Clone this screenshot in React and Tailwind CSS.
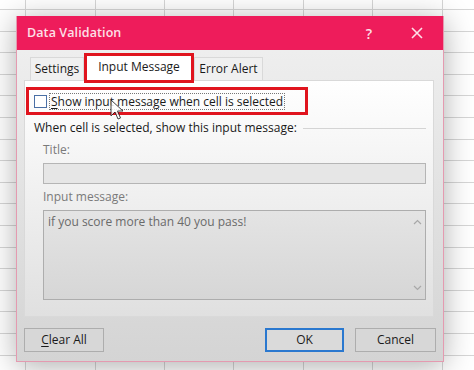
import React from "react";

const cols = [26, 70, 69, 69, 70, 69, 70, 40];
const rows = Array.from({ length: 18 });

function Sheet() {
  return (
    <div className="flex flex-col">
      <div className="flex h-[10px]">
        {cols.map((w, i) => (
          <div key={i} style={{ width: w }} className="shrink-0 border-r border-b border-[#d6d6d6]" />
        ))}
      </div>
      {rows.map((_, r) => (
        <div key={r} className="flex h-[21.6px]">
          {cols.map((w, i) => (
            <div key={i} style={{ width: w }} className="shrink-0 border-r border-b border-[#d6d6d6]" />
          ))}
        </div>
      ))}
    </div>
  );
}

function Cursor() {
  return (
    <svg className="absolute left-[110px] top-[99px] pointer-events-none" width="14" height="22" viewBox="0 0 14 22">
      <path d="M1 1 L1 17 L5 13 L8 20 L10.5 19 L7.5 12 L13 12 Z" fill="#fff" stroke="#222" strokeWidth="1" strokeLinejoin="round" opacity="0.85" />
    </svg>
  );
}

export default function App() {
  return (
    <div className="relative w-[474px] h-[370px] overflow-hidden bg-white" style={{ fontFamily: '"Open Sans", "Noto Sans", sans-serif' }}>
      <Sheet />

      {/* dialog window over the sheet */}
      <div className="absolute left-[16px] top-[16px] w-[428px] h-[346px] flex flex-col border border-t-0 border-[#e49ab0] bg-gradient-to-b from-[#f1f1f1] to-[#d4d4d4] shadow-[0_4px_28px_rgba(0,0,0,0.32)]">
        <div className="h-[34px] shrink-0 flex items-center bg-[#ee1c5b] pl-[10px] pr-[14px] text-[#fde0e8]">
          <span className="text-[12.5px] font-semibold tracking-[0.1px]">Data Validation</span>
          <span className="ml-auto text-[14px] font-semibold mr-[39px]">?</span>
          <svg width="12" height="12" viewBox="0 0 12 12" className="mr-[6px]">
            <path d="M1 1 L11 11 M11 1 L1 11" stroke="#fde0e8" strokeWidth="1.6" />
          </svg>
        </div>

        <div className="flex flex-col px-[7px] pt-[3px]">
          {/* tabs */}
          <div className="flex items-end h-[27px] pl-[6px] text-[12px] text-[#1a1a1a]">
            <div className="h-[23px] w-[54px] flex items-center justify-center border border-b-0 border-[#d9d9d9] bg-[#f0f0f0]">Settings</div>
            <div className="relative z-10 h-[30px] -mb-[3px] w-[110px] flex items-center justify-center border-[3px] border-[#e0141e] bg-white">
              <span className="-mt-[3px]">Input Message</span>
            </div>
            <div className="h-[23px] w-[69px] flex items-center justify-center border border-b-0 border-[#d9d9d9] bg-[#f0f0f0]">Error Alert</div>
          </div>

          {/* panel */}
          <div className="h-[237px] w-[410px] border border-[#d9d9d9] bg-gradient-to-b from-white to-[#e0e0e0] flex flex-col pr-[7px]">
            <div className="mt-[6px] ml-[1px] w-[282px] h-[28px] flex items-center border-[3px] border-[#e0141e] pl-[5px] text-[12px] text-[#1a1a1a]">
              <div className="w-[13px] h-[13px] border border-[#4a6fa5] bg-white" />
              <span className="ml-[3px] px-[1px] leading-[15px] outline outline-1 outline-dotted outline-[#777] outline-offset-0">
                <span className="underline underline-offset-2">S</span>how input message when cell is selected
              </span>
            </div>

            <div className="mt-[4px] pl-[9px] flex items-center text-[12px] text-[#1a1a1a] h-[18px]">
              <span>When cell is selected, show this input message:</span>
              <div className="flex-1 ml-[6px] h-px bg-[#d4d4d4]" />
            </div>

            <div className="pl-[18px] flex flex-col text-[12px]">
              <span className="mt-[4px] h-[18px] text-[#7a7a7a]">Title:</span>
              <div className="mt-[4px] h-[21px] border border-[#b5b5b5] bg-[#e6e6e6]" />
              <span className="mt-[4px] h-[18px] text-[#7a7a7a]">Input message:</span>
              <div className="mt-[4px] h-[90px] border border-[#adadad] bg-gradient-to-b from-[#e4e4e4] to-[#d6d6d6] flex">
                <span className="flex-1 pl-[4px] pt-[2px] text-[#6a6a6a]">if you score more than 40 you pass!</span>
                <div className="w-[16px] flex flex-col items-center justify-between py-[8px]">
                  <svg width="9" height="6" viewBox="0 0 9 6"><path d="M1 5 L4.5 1.5 L8 5" stroke="#a8a8a8" strokeWidth="1.2" fill="none" /></svg>
                  <svg width="9" height="6" viewBox="0 0 9 6"><path d="M1 1 L4.5 4.5 L8 1" stroke="#a8a8a8" strokeWidth="1.2" fill="none" /></svg>
                </div>
              </div>
            </div>
          </div>

          {/* buttons */}
          <div className="mt-[11px] flex items-center text-[12px] text-[#1a1a1a]">
            <div className="w-[80px] h-[24px] flex items-center justify-center border border-[#adadad] bg-[#d7d7d7]">
              <span><span className="underline underline-offset-2">C</span>lear All</span>
            </div>
            <div className="ml-auto w-[79px] h-[24px] flex items-center justify-center border-2 border-[#2a78cf] bg-[#dadada]">OK</div>
            <div className="ml-[11px] w-[81px] h-[24px] flex items-center justify-center border border-[#adadad] bg-[#d7d7d7]">Cancel</div>
          </div>
        </div>
      </div>

      <Cursor />
    </div>
  );
}
